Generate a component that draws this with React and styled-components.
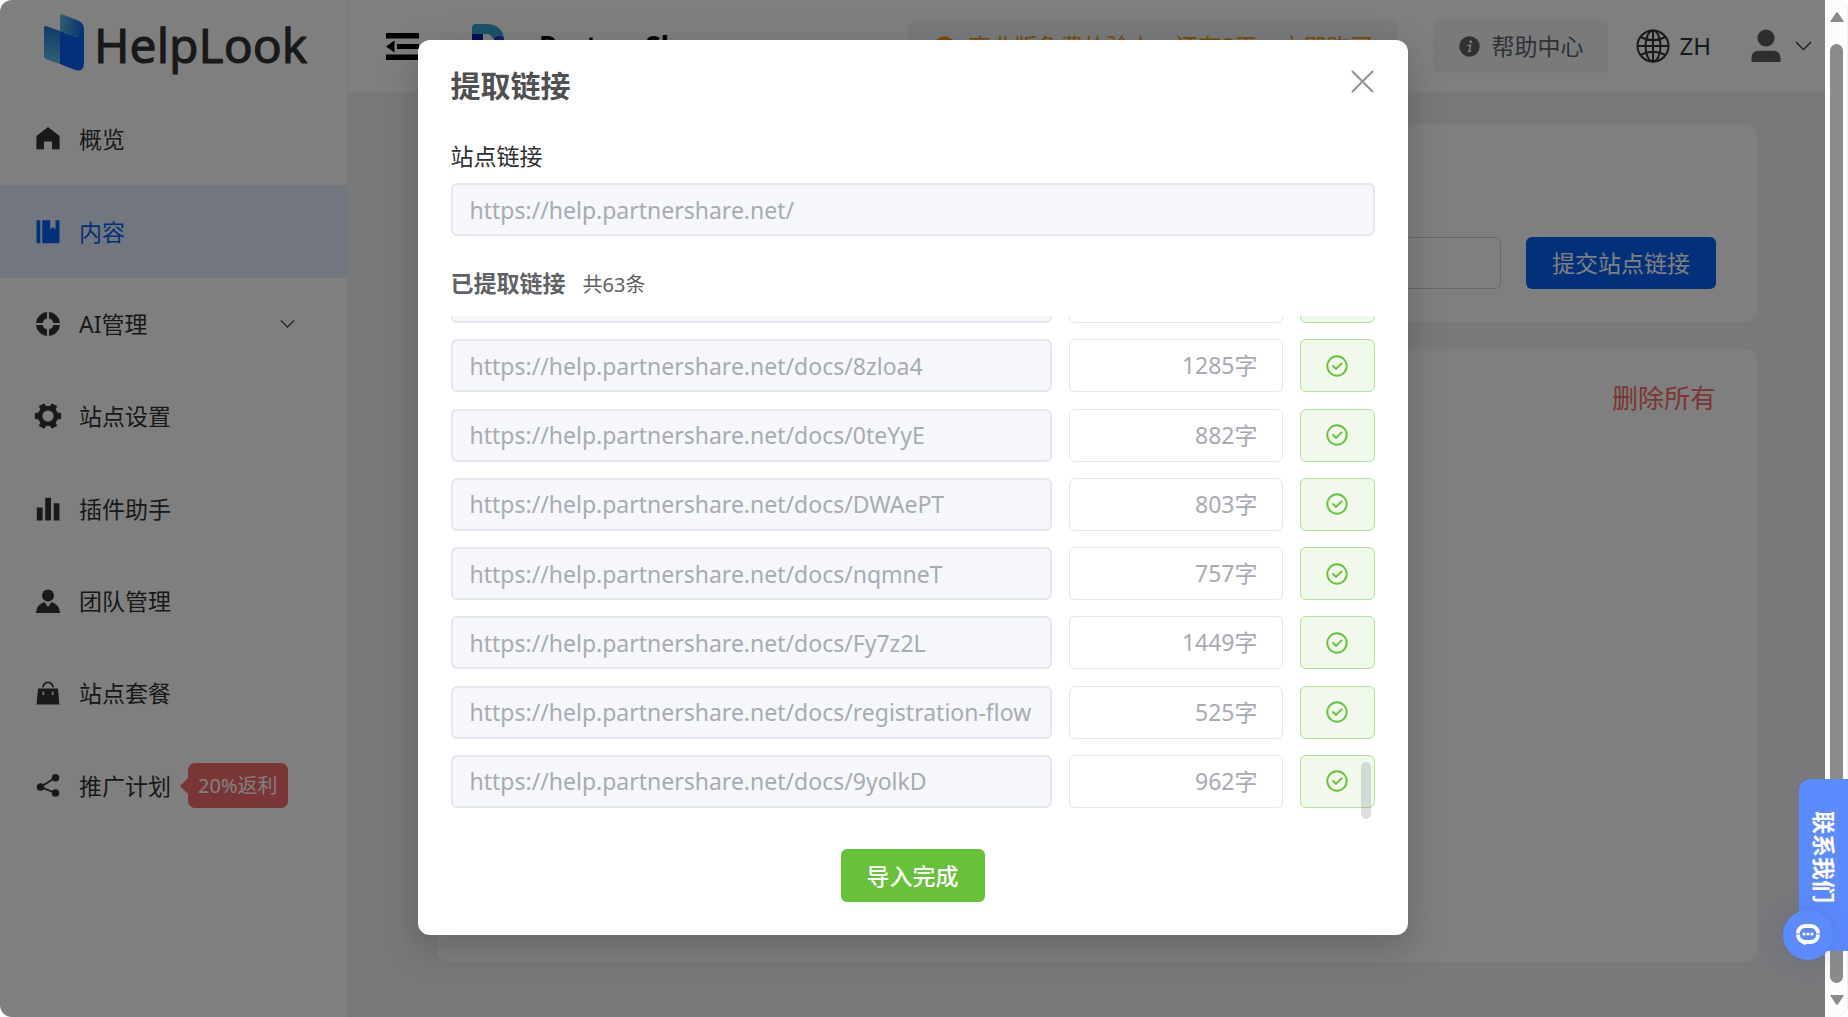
import React from "react"
import styled, { createGlobalStyle } from "styled-components"

const GlobalStyle = createGlobalStyle`
    * {
        box-sizing: border-box;
    }
    body {
        margin: 0;
        background: #fff;
        color: #303133;
        font-family: "Noto Sans", "Noto Sans CJK SC", sans-serif;
        font-size: 23px;
        line-height: 32px;
    }
    button, input {
        font: inherit;
        margin: 0;
    }
    h2, h3, p, ul {
        margin: 0;
        padding: 0;
    }
    svg {
        display: block;
        flex: none;
    }
`;

const Screen = styled.div`
    display: flex;
    height: 100vh;
    overflow: hidden;
`;

const Page = styled.div`
    position: relative;
    display: flex;
    flex: 1;
    min-width: 0;
    overflow: hidden;
    border-radius: 12px 0 0 12px;
    background: #f0f2f6;
`;

/* ---------- sidebar ---------- */

const Sidebar = styled.aside`
    width: 347px;
    flex: none;
    background: #fff;
`;

const Brand = styled.a`
    display: flex;
    align-items: flex-start;
    gap: 8px;
    height: 93px;
    padding: 14px 0 0 44px;
    color: #333;
    text-decoration: none;
`;

const BrandName = styled.text`
    fill: currentColor;
    stroke: currentColor;
    stroke-width: 1px;
    stroke-linejoin: round;
    font-family: "Noto Sans", sans-serif;
    font-size: 48px;
`;

const Nav = styled.nav`
    display: grid;
    grid-auto-rows: 1fr;
    height: 739px;
`;

const NavItem = styled.a`
    display: flex;
    align-items: center;
    padding: 0 52px 0 35px;
    color: ${props => props.$active ? "#0563f5" : "#333"};
    background: ${props => props.$active ? "#e4eefe" : "transparent"};
    text-decoration: none;

    svg:first-child {
        margin-right: 18px;
    }
    svg:last-child:not(:first-child) {
        margin-left: auto;
    }
`;

const Rebate = styled.span`
    position: relative;
    margin-left: 17px;
    padding: 0 10px;
    border-radius: 7px;
    background: #f56c6c;
    color: #fff;
    font-size: 20px;
    line-height: 45px;

    &::before {
        content: "";
        position: absolute;
        left: -8px;
        top: 15px;
        border: 8px solid transparent;
        border-left: 0;
        border-right-color: #f56c6c;
    }
`;

/* ---------- header ---------- */

const Main = styled.div`
    flex: 1;
    min-width: 0;
    display: flex;
    flex-direction: column;
`;

const Header = styled.header`
    display: flex;
    align-items: center;
    height: 92px;
    flex: none;
    padding: 0 13px 0 38px;
    background: #fff;
    border-left: 1px solid #f4f4f4;
`;

const FoldButton = styled.button`
    border: 0;
    padding: 0;
    margin-right: 52px;
    background: none;
    color: #000;
`;

const SiteName = styled.span`
    margin-left: 34px;
    color: #000;
    font-size: 28px;
    font-weight: 700;
`;

const Pill = styled.a`
    display: flex;
    align-items: center;
    gap: ${props => props.$trial ? "13px" : "11px"};
    height: 53px;
    margin-left: ${props => props.$trial ? "auto" : "36px"};
    padding: 0 25px 0 26px;
    border-radius: 6px;
    background: #f3f5f9;
    color: ${props => props.$trial ? "#f59a00" : "#606266"};
    text-decoration: none;
    white-space: nowrap;
`;

const HeaderButton = styled.button`
    display: flex;
    align-items: center;
    gap: ${props => props.$gap}px;
    margin-left: ${props => props.$left}px;
    border: 0;
    padding: 0;
    background: none;
    color: #333;
    font-size: 24px;
`;

/* ---------- page content ---------- */

const Content = styled.main`
    display: flex;
    flex: 1;
    flex-direction: column;
    gap: 27px;
    padding: 32px 68px 55px 90px;
`;

const Card = styled.section`
    display: flex;
    justify-content: flex-end;
    padding: 0 41px;
    border-radius: 12px;
    background: #fff;
`;

const SubmitCard = styled(Card)`
    gap: 25px;
    height: 198px;
    padding-top: 113px;
`;

const ListCard = styled(Card)`
    flex: 1;
    padding-top: 33px;
`;

const SiteInput = styled.input`
    flex: 1;
    height: 52px;
    border: 1px solid #d0d3dc;
    border-radius: 6px;
    padding: 0 18px;
    background: #fff;
`;

const SubmitButton = styled.button`
    width: 190px;
    height: 52px;
    border: 0;
    border-radius: 6px;
    background: #0563f5;
    color: #fff;
`;

const DeleteAll = styled.button`
    align-self: flex-start;
    border: 0;
    padding: 0;
    background: none;
    color: #f56c6c;
    font-size: 26px;
`;

/* ---------- dialog ---------- */

const Overlay = styled.div`
    position: absolute;
    inset: 0;
    display: flex;
    justify-content: center;
    align-items: flex-start;
    padding-top: 40px;
    background: rgba(0, 0, 0, 0.5);
`;

const Dialog = styled.div`
    width: 100%;
    max-width: 990px;
    padding: 27px 33px 33px;
    border-radius: 12px;
    background: #fff;
    box-shadow: 0 14px 38px 5px rgba(0, 0, 0, 0.12), 0 9px 23px rgba(0, 0, 0, 0.06);
`;

const DialogHead = styled.div`
    display: flex;
    justify-content: space-between;
    align-items: flex-start;
    margin-bottom: 35px;
`;

const DialogTitle = styled.h2`
    color: #505050;
    font-size: 30px;
    font-weight: 700;
    line-height: 38px;
`;

const CloseButton = styled.button`
    border: 0;
    padding: 3px 1px;
    background: none;
    color: #909399;
`;

const FieldLabel = styled.label`
    display: block;
    margin-bottom: 11px;
`;

const UrlInput = styled.input`
    width: 100%;
    min-width: 0;
    height: 53px;
    border: 2px solid #e4e7ed;
    border-radius: 6px;
    padding: 0 17px;
    background: #f5f7fa;
    color: #a8abb2;
`;

const ListHead = styled.div`
    display: flex;
    align-items: baseline;
    gap: 17px;
    height: 32px;
    margin: 31px 0 17px;
    color: #606266;
`;

const ListTitle = styled.h3`
    font-size: 23px;
    font-weight: 700;
`;

const ListTotal = styled.span`
    font-size: 20px;
`;

const ListViewport = styled.div`
    position: relative;
    display: flex;
    align-items: flex-end;
    height: 506px;
    padding-bottom: 14px;
    overflow: hidden;
`;

const LinkList = styled.ul`
    display: grid;
    align-content: space-between;
    flex: 1;
    min-width: 0;
    height: 538px;
    list-style: none;
`;

const LinkRow = styled.li`
    display: grid;
    grid-template-columns: 1fr 214px 75px;
    gap: 17px;
`;

const WordCount = styled.span`
    height: 53px;
    border: 1px solid #e4e7ed;
    border-radius: 6px;
    padding: 0 24px;
    color: #a8abb2;
    line-height: 51px;
    text-align: right;
`;

const StatusButton = styled.button`
    display: grid;
    place-items: center;
    height: 53px;
    border: 1px solid #b3e19d;
    border-radius: 6px;
    padding: 0;
    background: #f0f9eb;
    color: #67c23a;
`;

const ListThumb = styled.div`
    position: absolute;
    right: 4px;
    bottom: 3px;
    width: 10px;
    height: 57px;
    border-radius: 5px;
    background: rgba(144, 147, 153, 0.3);
`;

const DoneButton = styled.button`
    display: block;
    height: 53px;
    margin: 27px auto 0;
    border: 0;
    border-radius: 6px;
    padding: 0 26px;
    background: #67c23a;
    color: #fff;
    font-weight: 500;
`;

/* ---------- window scrollbar and contact tab ---------- */

const ScrollTrack = styled.div`
    display: flex;
    flex-direction: column;
    align-items: center;
    width: 23px;
    padding: 12px 0;
    border-radius: 0 12px 12px 0;
    background: #fcfcfc;
    box-shadow: inset -1px 0 #f0f0f0;
    color: #8b8b8b;
`;

const ScrollThumb = styled.div`
    flex: 1;
    width: 13px;
    margin: 22px 0 12px;
    border-radius: 7px;
    background: #8b8b8b;
`;

const Contact = styled.button`
    position: fixed;
    right: 0;
    bottom: 66px;
    width: 49px;
    height: 172px;
    border: 0;
    border-radius: 12px 0 0 0;
    padding: 0 0 16px;
    background: #5c8aff;
    color: #fff;
    font-weight: 700;
    line-height: 49px;
    writing-mode: vertical-rl;
    text-orientation: sideways;
`;

const ContactBubble = styled.span`
    position: absolute;
    left: -16px;
    bottom: -9px;
    display: grid;
    place-items: center;
    width: 50px;
    height: 50px;
    border-radius: 50%;
    background: #5c8aff;
    box-shadow: 0 0 24px rgba(60, 80, 140, 0.25);
`;

const BrandMark = () => (
    <svg width="40" height="57" viewBox="0 0 40 57">
        <defs>
            <linearGradient id="leaf" x1="0" y1="0" x2="0" y2="1">
                <stop offset="0" stopColor="#2274d8" />
                <stop offset="1" stopColor="#5cc4e6" />
            </linearGradient>
            <linearGradient id="flap" x1="0" y1="0.4" x2="1" y2="0.5">
                <stop offset="0" stopColor="#5abfe0" />
                <stop offset="1" stopColor="#0a62e8" />
            </linearGradient>
        </defs>
        <path d="M0 14Q0 11.2 2.6 12.2L16 17V50L2 45.2Q0 44.4 0 42Z" fill="url(#leaf)" />
        <path d="M16 17L30 22.3Q38 24 40 15V49Q40 59 30 55.5L16 50Z" fill="#0563f5" />
        <path d="M16 2Q16 -.6 18.6 .4L34 6.4Q40 9 40 15Q39 24 30 22.3L16 17Z" fill="url(#flap)" />
    </svg>
)

const WordMark = () => (
    <svg width="240" height="78" viewBox="0 0 240 78" overflow="visible">
        <BrandName x="2" y="49">HelpLook</BrandName>
    </svg>
)

const SiteMark = () => (
    <svg width="34" height="44" viewBox="0 0 34 44">
        <path d="M1 9H12V44H1Z" fill="#0a1fb0" />
        <path d="M23 14A6 6 0 0 1 33 14V26L23 32Z" fill="#2040e0" />
        <path d="M1 4Q1 0 5 0H17Q30 1 33 13Q26 8 22 15Q20 10 15 10H1Z" fill="#35a5d0" />
    </svg>
)

const FoldIcon = () => (
    <svg width="33" height="27" viewBox="0 0 33 27" fill="currentColor">
        <path d="M0 0H33V5.5H0ZM11 11H33V16H11ZM0 21.5H33V27H0ZM0 13.5L8.5 7.5V19.5Z" />
    </svg>
)

const Chevron = ({ width = 17 }) => (
    <svg width={width} height="10" viewBox="0 0 17 10" fill="none" stroke="currentColor" strokeWidth="1.3">
        <path d="M1 1L8.5 8.6L16 1" />
    </svg>
)

const NavIcon = ({ children }) => (
    <svg width="26" height="26" viewBox="0 0 26 26" fill="currentColor">{children}</svg>
)

const icons = {
    home: <NavIcon><path d="M13 1L24.6 10V23.3H17V15.5H9V23.3H1.4V10Z" /></NavIcon>,
    book: <NavIcon><path d="M1.5 1.3H5.3V24.3H1.5ZM7.2 1.3H15.2V10.6L17.8 8L20.5 10.6V1.3H24.5V24.3H7.2Z" /></NavIcon>,
    ring: (
        <NavIcon>
            <path d="M12 1A12 12 0 0 0 1 12H7.6A6 6 0 0 1 12 7.6ZM14 1A12 12 0 0 1 25 12H18.4A6 6 0 0 0 14 7.6ZM12 25A12 12 0 0 1 1 14H7.6A6 6 0 0 0 12 18.4ZM14 25A12 12 0 0 0 25 14H18.4A6 6 0 0 1 14 18.4Z" />
        </NavIcon>
    ),
    gear: (
        <NavIcon>
            <circle cx="13" cy="13" r="7.9" fill="none" stroke="currentColor" strokeWidth="4.6" />
            {[0, 60, 120, 180, 240, 300].map(angle => (
                <rect key={angle} x="21" y="9.8" width="5" height="6.4" transform={`rotate(${angle} 13 13)`} />
            ))}
        </NavIcon>
    ),
    bars: <NavIcon><path d="M1.8 11.5H7.6V24.5H1.8ZM10.2 1.7H16V24.5H10.2ZM18.8 7.3H24.4V24.5H18.8Z" /></NavIcon>,
    user: (
        <NavIcon>
            <circle cx="13" cy="7.5" r="6" />
            <path d="M9.5 14L13 19L16.5 14Q24 16 25.2 25H.8Q2 16 9.5 14Z" />
        </NavIcon>
    ),
    bag: (
        <NavIcon>
            <path d="M8 7.5A5 5.2 0 0 1 18 7.5" fill="none" stroke="currentColor" strokeWidth="1.7" />
            <path fillRule="evenodd" d="M3 8.5H23L24.4 24.5H1.6ZM7.6 11.5V15H9.2V11.5ZM16.8 11.5V15H18.4V11.5Z" />
        </NavIcon>
    ),
    share: (
        <NavIcon>
            <path d="M20.5 4.5L5.5 14L20.5 20" fill="none" stroke="currentColor" strokeWidth="1.8" />
            <circle cx="20.5" cy="4.8" r="3.8" />
            <circle cx="5.5" cy="14" r="3.8" />
            <circle cx="20.5" cy="20" r="3.8" />
        </NavIcon>
    )
}

const InfoIcon = () => (
    <svg width="21" height="21" viewBox="0 0 21 21">
        <circle cx="10.5" cy="10.5" r="10.2" fill="currentColor" />
        <circle cx="11.8" cy="5.8" r="1.5" fill="#f3f5f9" />
        <path d="M8.4 9.2H11.6L9.8 15.6Q10.8 15.6 12 14.4" fill="none" stroke="#f3f5f9" strokeWidth="1.5" />
    </svg>
)

const GlobeIcon = () => (
    <svg width="34" height="34" viewBox="0 0 34 34" fill="none" stroke="currentColor" strokeWidth="2">
        <circle cx="17" cy="17" r="15.5" />
        <ellipse cx="17" cy="17" rx="7.5" ry="15.5" />
        <path d="M17 1.5V32.5M1.5 17H32.5M4.5 8Q17 14.5 29.5 8M4.5 26Q17 19.5 29.5 26" />
    </svg>
)

const AvatarIcon = () => (
    <svg width="30" height="34" viewBox="0 0 30 34" fill="#5a5c60">
        <circle cx="15" cy="9" r="8.6" />
        <path d="M.5 33V29Q.5 21.8 8 21.8H22Q29.5 21.8 29.5 29V33Z" />
    </svg>
)

const CloseIcon = () => (
    <svg width="23" height="23" viewBox="0 0 23 23" fill="none" stroke="currentColor" strokeWidth="2" strokeLinecap="round">
        <path d="M1.5 1.5L21.5 21.5M21.5 1.5L1.5 21.5" />
    </svg>
)

const CheckIcon = () => (
    <svg width="22" height="22" viewBox="0 0 22 22" fill="none" stroke="currentColor" strokeWidth="1.9" strokeLinecap="round">
        <circle cx="11" cy="11" r="9.7" />
        <path d="M7 11L10 14L15.6 8.4" />
    </svg>
)

const ChatIcon = () => (
    <svg width="26" height="22" viewBox="0 0 26 22" fill="none" stroke="#fff">
        <rect x="3" y="2" width="20" height="16" rx="7" strokeWidth="3.8" />
        <path d="M7 18.5L10 21V18" fill="#fff" />
        <path d="M0 10H5M21 10H26" stroke="#5c8aff" strokeWidth="1" />
        <g fill="#fff" stroke="none">
            <circle cx="9" cy="10" r="1.6" />
            <circle cx="13" cy="10" r="1.6" />
            <circle cx="17" cy="10" r="1.6" />
        </g>
    </svg>
)

const Arrow = ({ down }) => (
    <svg width="14" height="10" viewBox="0 0 14 10" fill="currentColor">
        <path d={down ? "M1 0H13Q14 0 13.5 1L8 9.3Q7 10.4 6 9.3L.5 1Q0 0 1 0Z" : "M1 10H13Q14 10 13.5 9L8 .7Q7 -.4 6 .7L.5 9Q0 10 1 10Z"} />
    </svg>
)

const menu = [
    { icon: "home", text: "概览" },
    { icon: "book", text: "内容", active: true },
    { icon: "ring", text: "AI管理", expandable: true },
    { icon: "gear", text: "站点设置" },
    { icon: "bars", text: "插件助手" },
    { icon: "user", text: "团队管理" },
    { icon: "bag", text: "站点套餐" },
    { icon: "share", text: "推广计划", rebate: "20%返利" }
]

const site = "https://help.partnershare.net/"

// the first row is scrolled almost out of the list
const links = [
    { slug: "" },
    { slug: "8zloa4", words: 1285 },
    { slug: "0teYyE", words: 882 },
    { slug: "DWAePT", words: 803 },
    { slug: "nqmneT", words: 757 },
    { slug: "Fy7z2L", words: 1449 },
    { slug: "registration-flow", words: 525 },
    { slug: "9yolkD", words: 962 }
]

const ExtractDialog = () => (
    <Dialog role="dialog" aria-labelledby="dialog-title">
        <DialogHead>
            <DialogTitle id="dialog-title">提取链接</DialogTitle>
            <CloseButton type="button"><CloseIcon /></CloseButton>
        </DialogHead>
        <FieldLabel htmlFor="site-link">站点链接</FieldLabel>
        <UrlInput id="site-link" value={site} readOnly />
        <ListHead>
            <ListTitle id="list-title">已提取链接</ListTitle>
            <ListTotal>共63条</ListTotal>
        </ListHead>
        <ListViewport>
            <LinkList>
                {
                    links.map(link => (
                        <LinkRow key={link.slug}>
                            <UrlInput aria-labelledby="list-title" value={link.slug && `${site}docs/${link.slug}`} readOnly />
                            <WordCount>{link.words && `${link.words}字`}</WordCount>
                            <StatusButton type="button">{link.slug && <CheckIcon />}</StatusButton>
                        </LinkRow>
                    ))
                }
            </LinkList>
            <ListThumb />
        </ListViewport>
        <DoneButton type="button">导入完成</DoneButton>
    </Dialog>
)

const App = () => (
    <Screen>
        <GlobalStyle />
        <Page>
            <Sidebar>
                <Brand href="#">
                    <BrandMark />
                    <WordMark />
                </Brand>
                <Nav>
                    {
                        menu.map(item => (
                            <NavItem key={item.icon} href="#" $active={item.active}>
                                {icons[item.icon]}
                                {item.text}
                                {item.rebate && <Rebate>{item.rebate}</Rebate>}
                                {item.expandable && <Chevron width={15} />}
                            </NavItem>
                        ))
                    }
                </Nav>
            </Sidebar>
            <Main>
                <Header>
                    <FoldButton type="button"><FoldIcon /></FoldButton>
                    <SiteMark />
                    <SiteName>PartnerShare</SiteName>
                    <Pill $trial href="#"><InfoIcon />商业版免费体验中，还有8天，立即购买</Pill>
                    <Pill href="#"><InfoIcon />帮助中心</Pill>
                    <HeaderButton type="button" $gap={9} $left={28}><GlobeIcon />ZH</HeaderButton>
                    <HeaderButton type="button" $gap={14} $left={40}><AvatarIcon /><Chevron /></HeaderButton>
                </Header>
                <Content>
                    <SubmitCard>
                        <SiteInput aria-label="站点链接" />
                        <SubmitButton type="button">提交站点链接</SubmitButton>
                    </SubmitCard>
                    <ListCard>
                        <DeleteAll type="button">删除所有</DeleteAll>
                    </ListCard>
                </Content>
            </Main>
            <Overlay>
                <ExtractDialog />
            </Overlay>
        </Page>
        <ScrollTrack>
            <Arrow />
            <ScrollThumb />
            <Arrow down />
        </ScrollTrack>
        <Contact type="button">
            联系我们
            <ContactBubble><ChatIcon /></ContactBubble>
        </Contact>
    </Screen>
)

export default App
